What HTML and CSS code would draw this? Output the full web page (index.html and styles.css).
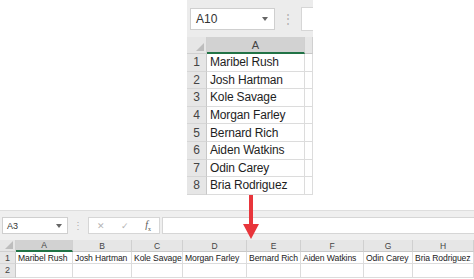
FILE: index.html
```html
<!DOCTYPE html>
<html>

<head>
    <title>Transpose column to row</title>
    <link rel="stylesheet" href="styles.css">
</head>

<body>

    <!-- Верхній знімок: імена в стовпці A -->
    <div class="top">
        <div class="bar">
            <div class="namebox">A10<span class="caret"></span></div>
            <div class="dots">⋮</div>
            <div class="fbox"></div>
        </div>
        <div class="sheet top-sheet">
            <div class="corner"><span class="tri"></span></div>
            <div class="colhead sel">A</div>
            <div class="colhead"></div>

            <div class="rownum">1</div><div class="cell">Maribel Rush</div><div class="cell"></div>
            <div class="rownum">2</div><div class="cell">Josh Hartman</div><div class="cell"></div>
            <div class="rownum">3</div><div class="cell">Kole Savage</div><div class="cell"></div>
            <div class="rownum">4</div><div class="cell">Morgan Farley</div><div class="cell"></div>
            <div class="rownum">5</div><div class="cell">Bernard Rich</div><div class="cell"></div>
            <div class="rownum">6</div><div class="cell">Aiden Watkins</div><div class="cell"></div>
            <div class="rownum">7</div><div class="cell">Odin Carey</div><div class="cell"></div>
            <div class="rownum">8</div><div class="cell">Bria Rodriguez</div><div class="cell"></div>
        </div>
    </div>

    <!-- Стрілка між знімками -->
    <div class="arrow">
        <div class="shaft"></div>
        <div class="head"></div>
    </div>

    <!-- Нижній знімок: імена в рядку 1 -->
    <div class="bottom">
        <div class="bar wide">
            <div class="namebox small">A3<span class="caret"></span></div>
            <div class="dots small-dots">⋮</div>
            <div class="fx-box">
                <span class="fx-icon">✕</span>
                <span class="fx-icon">✓</span>
                <span class="fx-icon fx"><i>f</i><sub>x</sub></span>
            </div>
            <div class="formula"></div>
        </div>
        <div class="sheet wide-sheet">
            <div class="corner"><span class="tri"></span></div>
            <div class="colhead sel">A</div>
            <div class="colhead">B</div>
            <div class="colhead">C</div>
            <div class="colhead">D</div>
            <div class="colhead">E</div>
            <div class="colhead">F</div>
            <div class="colhead">G</div>
            <div class="colhead">H</div>

            <div class="rownum">1</div>
            <div class="cell">Maribel Rush</div>
            <div class="cell">Josh Hartman</div>
            <div class="cell">Kole Savage</div>
            <div class="cell">Morgan Farley</div>
            <div class="cell">Bernard Rich</div>
            <div class="cell">Aiden Watkins</div>
            <div class="cell">Odin Carey</div>
            <div class="cell">Bria Rodriguez</div>

            <div class="rownum">2</div>
            <div class="cell"></div><div class="cell"></div><div class="cell"></div><div class="cell"></div>
            <div class="cell"></div><div class="cell"></div><div class="cell"></div><div class="cell"></div>
        </div>
    </div>

</body>

</html>
```

FILE: styles.css
```css
body { /* Сторінка */
    margin: 0;
    width: 474px;
    height: 279px;
    overflow: hidden;
    background: white;
    font-family: "Liberation Sans", Arial, sans-serif;
    color: #222;
    position: relative;
}

.top { /* Верхній знімок */
    margin-left: 187px;
    width: 126px;
    height: 210px;
}

.bar { /* Панель з полем імені */
    height: 37px;
    background: #ececec;
    display: flex;
    align-items: center;
    padding-left: 3px;
}

.namebox {
    width: 85px;
    height: 22px;
    background: white;
    border: 1px solid #cfcfcf;
    display: flex;
    align-items: center;
    justify-content: space-between;
    padding: 0 6px 0 5px;
    box-sizing: border-box;
    font-size: 12px;
    color: #333;
}

.caret {
    width: 0;
    height: 0;
    border-left: 3px solid transparent;
    border-right: 3px solid transparent;
    border-top: 4px solid #666;
}

.dots {
    width: 26px;
    text-align: center;
    color: #b0b0b0;
    font-size: 12px;
}

.fbox {
    flex: 1;
    height: 22px;
    background: white;
    border: 1px solid #d6d6d6;
    border-right: none;
}

.sheet { /* Сітка таблиці */
    display: grid;
    font-size: 12px;
}

.top-sheet {
    grid-template-columns: 20px 98px 8px;
    grid-template-rows: 17px repeat(8, 17.6px);
}

.corner {
    background: #e6e6e6;
    border-right: 1px solid #d0d0d0;
    border-bottom: 1px solid #d0d0d0;
    position: relative;
}

.tri {
    position: absolute;
    right: 2px;
    bottom: 2px;
    width: 0;
    height: 0;
    border-left: 8px solid transparent;
    border-bottom: 8px solid #bdbdbd;
}

.colhead {
    background: #e6e6e6;
    border-right: 1px solid #d0d0d0;
    border-bottom: 1px solid #c8c8c8;
    display: flex;
    align-items: center;
    justify-content: center;
    color: #444;
    font-size: 11px;
}

.colhead.sel {
    background: #d2d2d2;
    border-bottom: 2px solid #217346;
}

.rownum {
    background: #e6e6e6;
    border-right: 1px solid #c8c8c8;
    border-bottom: 1px solid #d6d6d6;
    display: flex;
    align-items: center;
    justify-content: center;
    color: #444;
}

.cell {
    border-right: 1px solid #dcdcdc;
    border-bottom: 1px solid #dcdcdc;
    display: flex;
    align-items: center;
    padding-left: 3px;
    white-space: nowrap;
    overflow: hidden;
}

.top-sheet .cell {
    font-size: 12px;
    letter-spacing: -0.15px;
    color: #1e1e1e;
}

.bottom { /* Нижній знімок */
    border-top: 1px solid #dedede;
}

.bar.wide {
    height: 29px;
    background: #efefef;
    padding-left: 2px;
}

.namebox.small {
    width: 66px;
    height: 17px;
    font-size: 9px;
    padding: 0 5px 0 4px;
}

.small-dots {
    width: 20px;
    font-size: 10px;
}

.fx-box {
    width: 72px;
    height: 17px;
    background: white;
    border: 1px solid #d6d6d6;
    box-sizing: border-box;
    display: flex;
    align-items: center;
    justify-content: space-around;
    color: #b5b5b5;
    font-size: 9px;
}

.fx {
    color: #555;
    font-family: "Liberation Serif", serif;
    font-size: 10px;
}

.fx sub {
    font-size: 6px;
}

.formula {
    flex: 1;
    height: 17px;
    margin-left: 2px;
    background: white;
    border: 1px solid #d6d6d6;
    border-right: none;
    box-sizing: border-box;
}

.wide-sheet {
    grid-template-columns: 16px 57px 59px 51px 64px 54px 63px 49px 61px;
    grid-template-rows: 12px 12px 14px;
    font-size: 8.6px;
    letter-spacing: -0.1px;
}

.wide-sheet .colhead {
    font-size: 8.5px;
}

.wide-sheet .rownum {
    font-size: 9px;
    align-items: flex-start;
    padding-top: 1px;
}

.wide-sheet .cell {
    padding-left: 2px;
}

.arrow { /* Червона стрілка поверх знімків */
    position: absolute;
    left: 243px;
    top: 195px;
    width: 16px;
    display: flex;
    flex-direction: column;
    align-items: center;
}

.shaft {
    width: 4px;
    height: 29px;
    background: #e8353b;
}

.head {
    width: 0;
    height: 0;
    border-left: 8px solid transparent;
    border-right: 8px solid transparent;
    border-top: 15px solid #e8353b;
}
```
